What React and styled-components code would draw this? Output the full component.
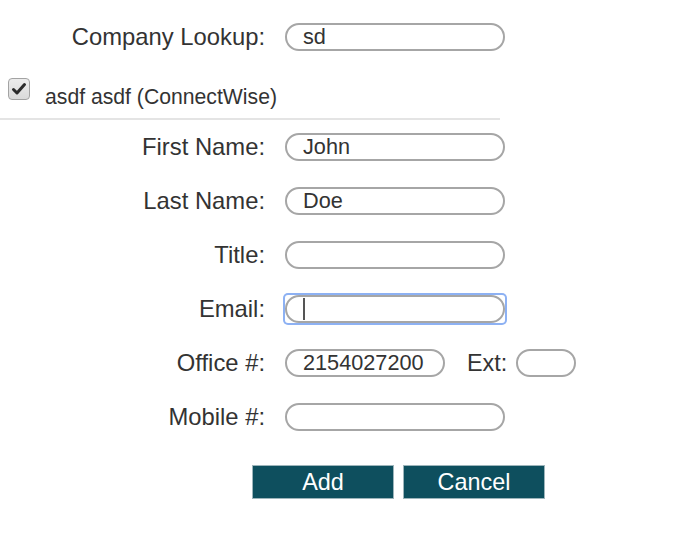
import React from 'react';
import styled, { createGlobalStyle, css } from 'styled-components';

const GlobalStyle = createGlobalStyle`
  body {
    margin: 0;
    background: #fff;
    font-family: "Liberation Sans", Arial, sans-serif;
    color: #333;
  }
`;

const Form = styled.form`
  width: 692px;
  padding-top: 10px;
`;

const Row = styled.div`
  display: flex;
  align-items: center;
  height: 54px;
`;

const Label = styled.label`
  width: 265px;
  margin-right: 20px;
  text-align: right;
  font-size: 23.8px;
  color: #333;
  white-space: nowrap;
`;

const SideLabel = styled.label`
  margin: 0 9px 0 22px;
  font-size: 23.4px;
  color: #333;
`;

const Field = styled.span`
  position: relative;
  display: inline-flex;
  border-radius: 3px;

  ${p =>
    p.$focused &&
    css`
      box-shadow: 0 0 0 2px #8db1f3;

      &::after {
        content: '';
        position: absolute;
        left: 18px;
        top: 3px;
        width: 2px;
        height: 22px;
        background: #555;
      }
    `}
`;

const Input = styled.input`
  box-sizing: border-box;
  width: ${p => p.$width || 220}px;
  height: 28px;
  border: 2px solid #a6a6a6;
  border-radius: 14px;
  padding: 0 0 1px 16px;
  font: 21.7px "Liberation Sans", Arial, sans-serif;
  color: #333;
  background: #fff;
  outline: none;
  caret-color: transparent;
`;

const CheckRow = styled.div`
  display: flex;
  align-items: flex-start;
  height: 54px;
  box-sizing: border-box;
  padding: 14px 0 0 8px;
`;

const CheckBox = styled.span`
  box-sizing: border-box;
  width: 22px;
  height: 22px;
  border: 1px solid #a3a3a3;
  border-radius: 4px;
  background: linear-gradient(#ececec, #dadada);
  display: flex;
  align-items: center;
  justify-content: center;
`;

const CheckLabel = styled.span`
  margin-left: 15px;
  padding-top: 7px;
  font-size: 21.2px;
  color: #333;
`;

const Divider = styled.div`
  width: 500px;
  height: 2px;
  background: #e4e4e4;
`;

const Buttons = styled.div`
  display: flex;
  gap: 9px;
  margin-top: 21px;
  padding-left: 252px;
`;

const Button = styled.button`
  width: 142px;
  height: 34px;
  padding: 0;
  border: 1px solid #9db5bb;
  background: #0e4f5e;
  color: #fff;
  font: 23.4px "Liberation Sans", Arial, sans-serif;
  cursor: pointer;
`;

const TextRow = ({ label, value = '', width, focused }) => (
  <Row>
    <Label>{label}</Label>
    <Field $focused={focused}>
      <Input $width={width} defaultValue={value} />
    </Field>
  </Row>
);

export default function App() {
  return (
    <>
      <GlobalStyle />
      <Form onSubmit={e => e.preventDefault()}>
        <TextRow label="Company Lookup:" value="sd" />
        <CheckRow>
          <CheckBox>
            <svg width="16" height="16" viewBox="0 0 16 16">
              <path
                d="M2.5 8.5 L6 12 L13.5 3.5"
                fill="none"
                stroke="#2b2b2b"
                strokeWidth="3"
                strokeLinecap="round"
                strokeLinejoin="round"
              />
            </svg>
          </CheckBox>
          <CheckLabel>asdf asdf (ConnectWise)</CheckLabel>
        </CheckRow>
        <Divider />
        <TextRow label="First Name:" value="John" />
        <TextRow label="Last Name:" value="Doe" />
        <TextRow label="Title:" />
        <TextRow label="Email:" focused />
        <Row>
          <Label>Office #:</Label>
          <Field>
            <Input $width={160} defaultValue="2154027200" />
          </Field>
          <SideLabel>Ext:</SideLabel>
          <Field>
            <Input $width={60} />
          </Field>
        </Row>
        <TextRow label="Mobile #:" />
        <Buttons>
          <Button type="button">Add</Button>
          <Button type="button">Cancel</Button>
        </Buttons>
      </Form>
    </>
  );
}
